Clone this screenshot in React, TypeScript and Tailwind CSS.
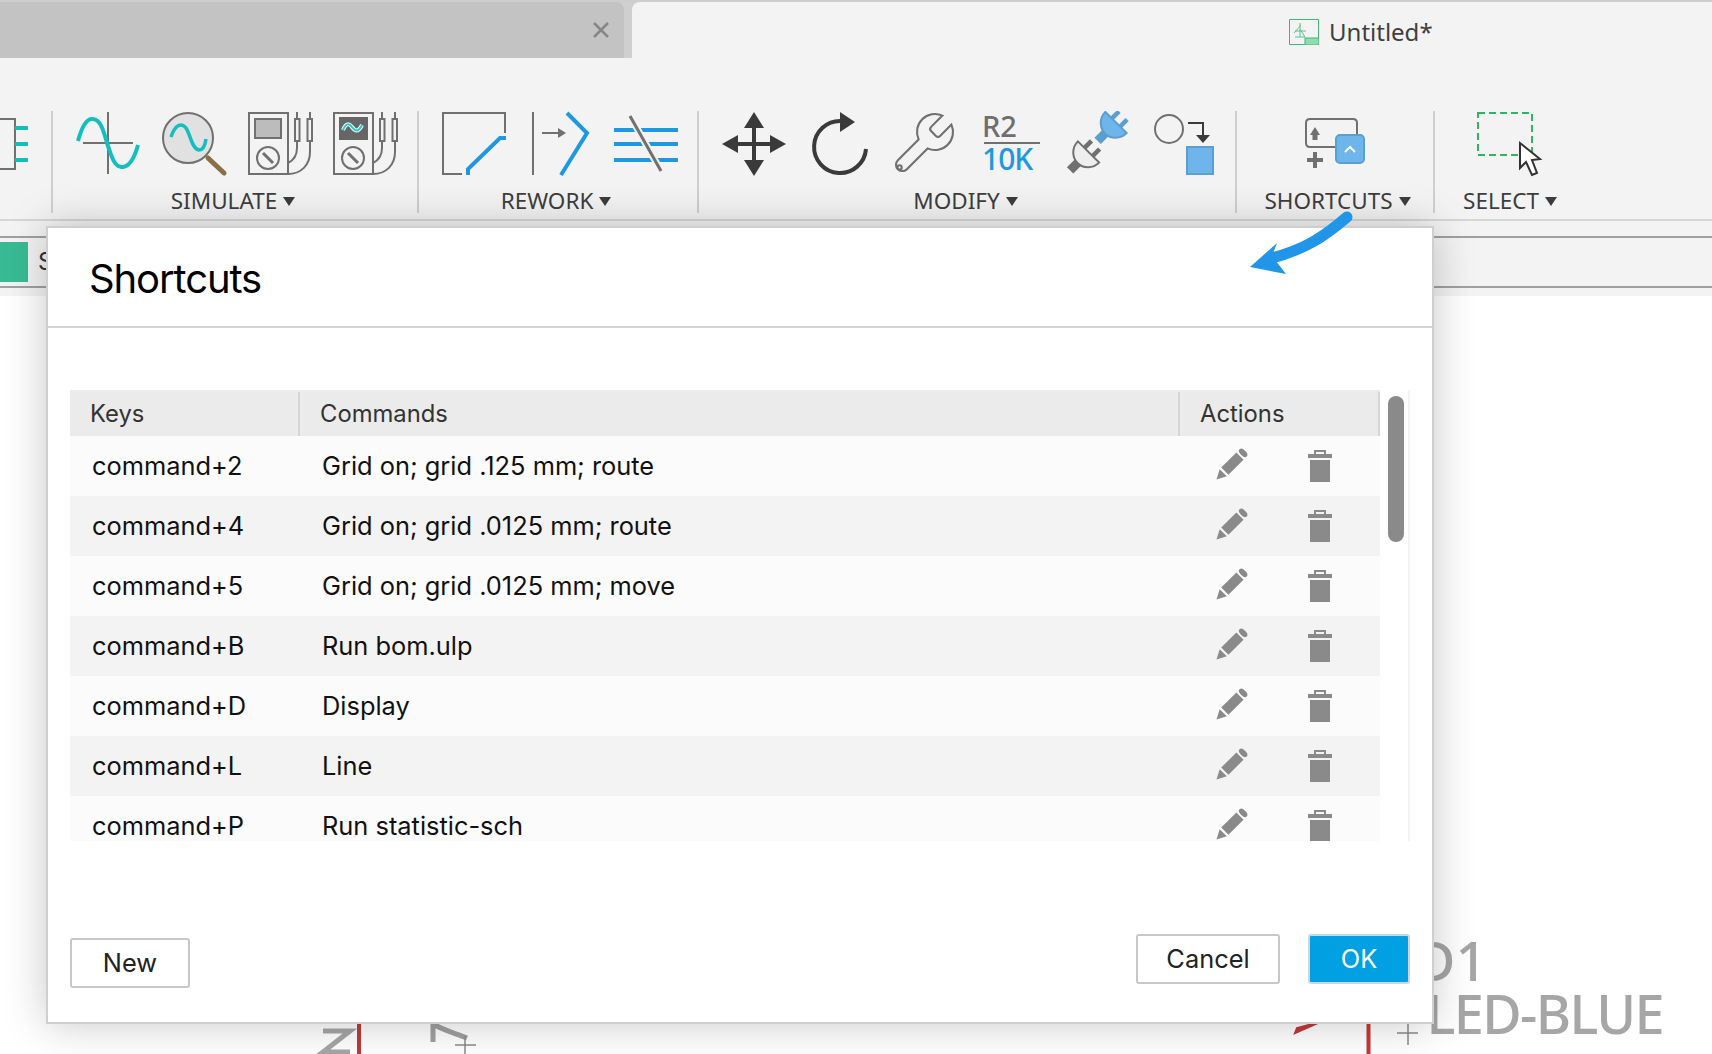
import React from "react";

const GRAY = "#707070";
const TEAL = "#12bfc0";
const BLUE = "#1f98e3";
const LIGHTBLUE = "#6db5ea";
const DARK = "#3a3a3a";

const Caret = () => (
  <svg viewBox="0 0 12 9" className="w-[12px] h-[9px] ml-[6px] shrink-0">
    <path d="M0 0H12L6 9Z" fill="#3c3c3c" />
  </svg>
);

function Meter({ dark }: { dark?: boolean }) {
  return (
    <g fill="none" stroke={GRAY} strokeWidth="2">
      <rect x="249" y="113" width="39" height="61" />
      {dark ? (
        <rect x="255" y="118" width="27" height="21" fill="#666" stroke="#666" />
      ) : (
        <rect x="255" y="119" width="26" height="19" fill="#bcbcbc" />
      )}
      {dark && <path d="M258 130c3-7 6-7 9-3s6 6 10-2" stroke="#e8ffff" strokeWidth="4" />}
      {dark && <path d="M258 130c3-7 6-7 9-3s6 6 10-2" stroke="#2fc6c6" strokeWidth="2" />}
      <circle cx="268" cy="158" r="11" />
      <path d="M263 153L273 163" strokeWidth="3" />
      <rect x="295" y="119" width="4.5" height="22" />
      <rect x="307.500" y="119" width="4.5" height="22" />
      <path d="M297 112V119M310 112V119M297 141V148C297 156 294 160 288 163M310 141V152C310 165 301 174 288 174" />
    </g>
  );
}

const Plug = ({ x, y, fill, stroke, stem }: { x: number; y: number; fill: string; stroke: string; stem: string }) => (
  <g transform={`translate(${x} ${y}) rotate(45)`}>
    <rect x="-8" y="-10" width="4.500" height="10" fill={stem} />
    <rect x="3.500" y="-10" width="4.500" height="10" fill={stem} />
    <rect x="-4.500" y="14" width="9" height="12" fill={stem} />
    <path d="M-15 0H15A15 15.500 0 0 1 -15 0Z" fill={fill} stroke={stroke} strokeWidth="2" />
  </g>
);

const Pencil = () => (
  <svg viewBox="0 0 32 32" className="w-[36px] h-[36px]">
    <g transform="rotate(45 16 16)" fill="#8a8a8a">
      <rect x="11.500" y="-3" width="9" height="5" rx="4" />
      <rect x="11.500" y="3.500" width="9" height="19" />
      <path d="M11.500 24.500H20.500L16 33Z" />
    </g>
  </svg>
);

const Trash = () => (
  <svg viewBox="0 0 24 32" className="w-[24px] h-[32px]">
    <path d="M7 4V1H17V4" fill="none" stroke="#8a8a8a" strokeWidth="2" />
    <rect x="0" y="4" width="24" height="4" fill="#8a8a8a" />
    <rect x="2" y="10" width="20" height="22" fill="#8a8a8a" />
  </svg>
);

const rows: [string, string][] = [
  ["command+2", "Grid on; grid .125 mm; route"],
  ["command+4", "Grid on; grid .0125 mm; route"],
  ["command+5", "Grid on; grid .0125 mm; move"],
  ["command+B", "Run bom.ulp"],
  ["command+D", "Display"],
  ["command+L", "Line"],
  ["command+P", "Run statistic-sch"],
];

function Group({ label, className, iconClass, labelClass, children }: { label: string; className: string; iconClass: string; labelClass?: string; children: React.ReactNode }) {
  return (
    <div className={`h-[102px] flex flex-col border-l-2 border-[#cfcfcf] ${className}`}>
      <div className={`flex h-[66px] ${iconClass}`}>{children}</div>
      <div className={`flex items-center justify-center h-[36px] pt-[12px] text-[22.5px] text-[#3d3d3d] font-['Noto_Sans',sans-serif] ${labelClass ?? ""}`}>
        {label}
        <Caret />
      </div>
    </div>
  );
}

export default function App() {
  return (
    <div className="relative w-[1712px] h-[1054px] overflow-hidden bg-white font-['Inter',sans-serif]">
      {/* tab strip */}
      <div className="flex h-[58px] border-t-2 border-[#cdcdcd] bg-[#cfcfcf]">
        <div className="flex items-center justify-end w-[624px] h-full pr-[14px] bg-[#c3c3c3] rounded-tr-[8px]">
          <svg viewBox="0 0 18 18" className="w-[18px] h-[18px]">
            <path d="M2 2L16 16M16 2L2 16" stroke="#868686" strokeWidth="2.500" />
          </svg>
        </div>
        <div className="w-[8px] h-full" />
        <div className="flex-1 flex items-center pl-[657px] pt-[3px] bg-[#f3f3f3] rounded-tl-[8px]">
          <svg viewBox="0 0 30 26" className="w-[30px] h-[26px]">
            <path d="M.5 .5H29.500V25.500H.5Z" fill="none" stroke="#3cb878" />
            <path d="M5 14L12 6M11 4V18M6 12H17M6 18H16L11 10" fill="none" stroke="#58c68b" strokeWidth="1" />
            <rect x="16" y="19" width="14" height="7" fill="#8fdcae" stroke="#3cb878" />
          </svg>
          <span className="ml-[10px] text-[24px] text-[#3f3f3f] font-['Noto_Sans',sans-serif]">Untitled*</span>
        </div>
      </div>

      {/* ribbon */}
      <div className="flex h-[163px] pt-[53px] bg-[#f3f3f3] border-b-2 border-[#d6d6d6]">
        <div className="w-[51px] h-[66px] shrink-0">
          <svg viewBox="0 111 51 66" className="w-[51px] h-[66px]">
            <path d="M0 119H15V169H0" fill="none" stroke={GRAY} strokeWidth="2" />
            <path d="M15 128H28M15 144H28M15 160H28" stroke={TEAL} strokeWidth="4" />
          </svg>
        </div>
        <Group label="SIMULATE" className="w-[366px]" iconClass="pl-[18px]" labelClass="pr-[4px]">
          <svg viewBox="70 111 85 66" className="w-[85px] h-[66px]">
            <path d="M107 112V174M82 143H132" stroke={GRAY} strokeWidth="2" />
            <path d="M77 141C81 126 86 118 92 119C101 120 103 134 107 146C111 158 114 168 122 167C129 166 134 156 137 145" fill="none" stroke={TEAL} strokeWidth="4" />
          </svg>
          <svg viewBox="156 111 80 66" className="w-[80px] h-[66px]">
            <path d="M208 158L224 173" stroke="#8b6f47" strokeWidth="5" strokeLinecap="round" />
            <circle cx="188" cy="138" r="25" fill="#e1e1e1" stroke={GRAY} strokeWidth="2" />
            <path d="M171 137C175 125 181 122 186 128C191 136 192 149 199 150C203 150 205 146 206 139" fill="none" stroke={TEAL} strokeWidth="3.500" />
          </svg>
          <svg viewBox="236 111 85 66" className="w-[85px] h-[66px]">
            <Meter />
          </svg>
          <svg viewBox="236 111 86 66" className="w-[86px] h-[66px]">
            <Meter dark />
          </svg>
        </Group>
        <Group label="REWORK" className="w-[280px]" iconClass="pl-[19px]" labelClass="pr-[4px]">
          <svg viewBox="438 111 86 66" className="w-[86px] h-[66px]">
            <path d="M462 174H443V113H505V133" fill="none" stroke={GRAY} strokeWidth="2" />
            <path d="M468 175V169L500 138H506" fill="none" stroke={BLUE} strokeWidth="4" />
          </svg>
          <svg viewBox="524 111 82 66" className="w-[82px] h-[66px]">
            <path d="M533 112V175M542 133H560" stroke={GRAY} strokeWidth="2" />
            <path d="M558 128L566 133L558 138Z" fill={GRAY} />
            <path d="M567 113L587 133L561 175" fill="none" stroke={BLUE} strokeWidth="4" />
          </svg>
          <svg viewBox="606 111 80 66" className="w-[80px] h-[66px]">
            <path d="M614 130H678M614 144H678M614 160H678" stroke={BLUE} strokeWidth="4" />
            <path d="M630 116L661 171" stroke="#f3f3f3" strokeWidth="7" />
            <path d="M630 116L661 171" stroke={GRAY} strokeWidth="3" />
          </svg>
        </Group>
        <Group label="MODIFY" className="w-[538px]" iconClass="pl-[15px]" labelClass="pr-[3px]">
          <svg viewBox="714 111 88 66" className="w-[88px] h-[66px]">
            <path d="M754 124V163M735 144H773" stroke={DARK} strokeWidth="4" />
            <path d="M754 112L744 128H764ZM754 176L744 160H764ZM722 144L738 135V153ZM786 144L770 135V153Z" fill={DARK} />
          </svg>
          <svg viewBox="802 111 80 66" className="w-[80px] h-[66px]">
            <path d="M866 149A26 26 0 1 1 841 121" fill="none" stroke={DARK} strokeWidth="4" />
            <path d="M840 112L855 122L840 132Z" fill={DARK} />
          </svg>
          <svg viewBox="882 111 88 66" className="w-[88px] h-[66px]">
            <g transform="translate(887 108) scale(3)" fill="none" stroke={GRAY} strokeWidth="0.7">
              <path d="M14.700 6.300a1 1 0 0 0 0 1.400l1.600 1.600a1 1 0 0 0 1.400 0l3.770-3.770a6 6 0 0 1-7.940 7.940l-6.910 6.910a2.120 2.120 0 0 1-3-3l6.910-6.910a6 6 0 0 1 7.940-7.940l-3.760 3.760z" />
              <circle cx="4.200" cy="19.800" r="0.700" />
            </g>
          </svg>
          <svg viewBox="970 111 86 66" className="w-[86px] h-[66px]">
            <text x="982" y="137" fontSize="29" fontWeight="500" fill="#6e6e6e" fontFamily="'Noto Sans', sans-serif">R2</text>
            <path d="M984 143H1040" stroke={GRAY} strokeWidth="2" />
            <text x="982" y="170" fontSize="30" fontWeight="500" fill={BLUE} fontFamily="'Noto Sans', sans-serif" letterSpacing="-1">10K</text>
          </svg>
          <svg viewBox="1056 111 84 66" className="w-[84px] h-[66px]">
            <Plug x={1116} y={122.500} fill={LIGHTBLUE} stroke="#5a9fcf" stem="#5a9fcf" />
            <Plug x={1088.500} y={152} fill="#eeeeee" stroke={GRAY} stem={GRAY} />
          </svg>
          <svg viewBox="1140 111 86 66" className="w-[86px] h-[66px]">
            <circle cx="1169" cy="129" r="14" fill="none" stroke={GRAY} strokeWidth="2" />
            <path d="M1188 123H1203V136" fill="none" stroke={DARK} strokeWidth="2" />
            <path d="M1196 135H1210L1203 143Z" fill={DARK} />
            <rect x="1187" y="147" width="26" height="27" fill={LIGHTBLUE} stroke="#5a9fcf" strokeWidth="2" />
          </svg>
        </Group>
        <Group label="SHORTCUTS" className="w-[198px]" iconClass="pl-[58px]" labelClass="pl-[5px]">
          <svg viewBox="1296 111 80 66" className="w-[80px] h-[66px]">
            <path d="M1340 147H1311Q1307 147 1307 143V123Q1307 119 1311 119H1354Q1358 119 1358 123V136" fill="none" stroke={GRAY} strokeWidth="2" />
            <path d="M1316 127L1321 135H1318.500V140H1313.500V135H1311Z" fill={GRAY} />
            <path d="M1316 152V168M1308 160H1324" stroke={GRAY} strokeWidth="4" />
            <rect x="1337" y="135" width="28" height="28" rx="4" fill={LIGHTBLUE} stroke="#5a9fcf" strokeWidth="2" />
            <path d="M1346 152L1351 147L1356 152" fill="none" stroke="#fff" strokeWidth="2" />
          </svg>
        </Group>
        <Group label="SELECT" className="w-[152px]" iconClass="pl-[34px]">
          <svg viewBox="1470 111 80 66" className="w-[80px] h-[66px]">
            <rect x="1479" y="113" width="54" height="42" fill="none" stroke="#2fb463" strokeWidth="2" strokeDasharray="7 4" />
            <path d="M1521 143V168L1527 162L1533 175L1538 173L1533 160L1541 159Z" fill="#fff" stroke="#333" strokeWidth="2" />
          </svg>
        </Group>
      </div>

      {/* sheet bar */}
      <div className="h-[75px] pt-[15px] bg-[#f3f3f3]">
        <div className="flex items-center h-[52px] border-y-2 border-[#a0a0a0]">
          <div className="w-[28px] h-[40px] bg-[#38bb94]" />
          <span className="ml-[10px] text-[24px] text-[#333]">S</span>
        </div>
      </div>

      {/* canvas content behind the dialog */}
      <div className="absolute right-[225px] top-[930px] text-[55px] leading-[60px] font-medium text-[#a6a6a6] font-['Noto_Sans',sans-serif]">D1</div>
      <div className="absolute right-[49px] top-[983px] text-[54px] leading-[60px] font-medium tracking-[-1.6px] text-[#a6a6a6] font-['Noto_Sans',sans-serif]">LED-BLUE</div>
      <svg viewBox="0 1020 1712 34" className="absolute left-0 bottom-0 w-[1712px] h-[34px]">
        <path d="M359 1020V1054M1368.500 1020V1054" stroke="#c23a3a" strokeWidth="4" />
        <path d="M1295 1033L1320 1022L1297 1028Z" fill="#c23a3a" stroke="#c23a3a" strokeWidth="2" />
        <path d="M433 1042V1024C445 1031 455 1033 467 1038" fill="none" stroke="#a0a0a0" strokeWidth="5" />
        <path d="M465 1036V1054M455 1045H476M1408 1024V1045M1397 1033H1418" stroke="#8a8a8a" strokeWidth="1.500" />
        <path d="M323 1031H350L323 1052H350" fill="none" stroke="#a6a6a6" strokeWidth="5" />
      </svg>

      {/* dialog */}
      <div className="absolute left-[46px] top-[226px] w-[1388px] h-[798px] flex flex-col bg-white border-2 border-[#cfcfcf] shadow-[0_0_40px_rgba(0,0,0,0.22)]">
        <div className="flex items-center h-[100px] pl-[41px] pt-[3px] border-b-2 border-[#d4d4d4] text-[40px] tracking-[-1.1px] text-black">Shortcuts</div>
        <div className="flex mt-[62px] ml-[22px] w-[1340px]">
          <div className="w-[1310px]">
            <div className="flex items-center h-[46px] pt-[2px] bg-[#ebebeb] text-[23.800px] text-[#333]">
              <div className="w-[230px] h-full flex items-center pl-[20px] border-r-2 border-[#d6d6d6]">Keys</div>
              <div className="w-[880px] h-full flex items-center pl-[20px] border-r-2 border-[#d6d6d6]">Commands</div>
              <div className="flex-1 h-full flex items-center pl-[20px] border-r-2 border-[#d6d6d6]">Actions</div>
            </div>
            <div className="h-[405px] overflow-hidden">
              {rows.map(([k, c], i) => (
                <div key={k} className={`flex items-center h-[60px] shrink-0 text-[25.400px] text-[#111] ${i % 2 === 0 ? "bg-[#fbfbfb]" : "bg-[#f3f3f3]"}`}>
                  <div className="w-[230px] pl-[22px]">{k}</div>
                  <div className="w-[880px] pl-[22px]">{c}</div>
                  <div className="flex items-center pl-[32px]">
                    <Pencil />
                    <div className="ml-[60px]">
                      <Trash />
                    </div>
                  </div>
                </div>
              ))}
            </div>
          </div>
          <div className="w-[30px] pt-[6px] pl-[8px] border-r-2 border-[#f3f3f3]">
            <div className="w-[16px] h-[146px] rounded-[8px] bg-[#8a8a8a]" />
          </div>
        </div>
        <div className="flex mt-[93px] ml-[22px] w-[1340px]">
          <button className="w-[120px] h-[50px] mt-[4px] bg-white border-2 border-[#c8c8c8] rounded-[3px] text-[25.400px] text-[#222]">New</button>
          <button className="w-[144px] h-[50px] ml-auto bg-white border-2 border-[#c8c8c8] rounded-[3px] text-[25.400px] text-[#222]">Cancel</button>
          <button className="w-[102px] h-[50px] ml-[28px] bg-[#00a0e3] border-2 border-[#c8d8e0] rounded-[3px] text-[25.400px] text-white">OK</button>
        </div>
      </div>

      {/* annotation arrow */}
      <svg viewBox="1240 210 120 70" className="absolute left-[1240px] top-[210px] w-[120px] h-[70px]">
        <path d="M1347 217C1325 236 1305 250 1268 259" fill="none" stroke="#2196e8" strokeWidth="11" strokeLinecap="round" />
        <path d="M1250 267L1277 243L1272 256L1286 274Z" fill="#2196e8" />
      </svg>
    </div>
  );
}
